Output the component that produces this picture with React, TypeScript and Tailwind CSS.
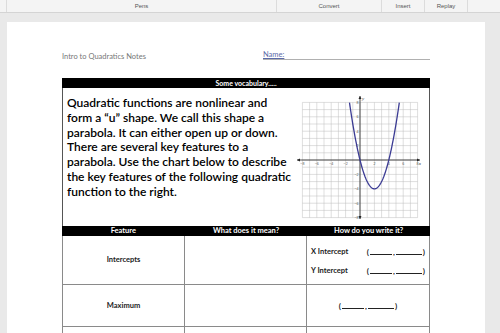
import React from 'react';

const U = 7.2;
const OX = 64;
const OY = 66;

const px = (x: number) => OX + x * U;
const py = (y: number) => OY - y * U;

function parabolaPath() {
    const pts: string[] = [];
    for (let i = 0; i <= 80; i++) {
        const x = -1.46 + (6.92 * i) / 80;
        const y = x * x - 4 * x;
        pts.push(`${i === 0 ? 'M' : 'L'}${px(x).toFixed(2)},${py(y).toFixed(2)}`);
    }
    return pts.join(' ');
}

const Graph = () => {
    const ticks = [-8, -6, -4, -2, 2, 4, 6, 8];
    const grid = Array.from({ length: 17 }, (_, i) => i - 8);
    return (
        <svg width="126" height="126" viewBox="0 0 126 126" className="shrink-0">
            {grid.map(g => (
                <g key={g}>
                    <line x1={px(g)} y1={py(8)} x2={px(g)} y2={py(-8)} stroke="#bdbdbd" strokeWidth="0.5" />
                    <line x1={px(-8)} y1={py(g)} x2={px(8)} y2={py(g)} stroke="#bdbdbd" strokeWidth="0.5" />
                </g>
            ))}
            <line x1="1" y1={OY} x2="124" y2={OY} stroke="#222" strokeWidth="0.8" />
            <line x1={OX} y1="2" x2={OX} y2="125" stroke="#222" strokeWidth="0.8" />
            <path d={`M124,${OY} l-3,-1.5 v3 z M1,${OY} l3,-1.5 v3 z`} fill="#222" />
            <path d={`M${OX},2 l-1.5,3 h3 z M${OX},125 l-1.5,-3 h3 z`} fill="#222" />
            {ticks.map(t => (
                <g key={t} fontSize="3.6" fill="#555" fontFamily="Liberation Sans, sans-serif">
                    <text x={px(t)} y={OY + 5} textAnchor="middle">{t < 0 ? `\u2212${-t}` : t}</text>
                    <text x={OX - 1.5} y={py(t) + 1.3} textAnchor="end">{t < 0 ? `\u2212${-t}` : t}</text>
                </g>
            ))}
            <text x="125" y={OY + 5} fontSize="5" fontStyle="italic" fill="#333" textAnchor="end" fontFamily="Liberation Serif, serif">x</text>
            <text x={OX + 2} y="6" fontSize="5" fontStyle="italic" fill="#333" fontFamily="Liberation Serif, serif">y</text>
            <path d={parabolaPath()} fill="none" stroke="#3b3b94" strokeWidth="1.3" />
        </svg>
    );
};

const Blank = () => (
    <span className="inline-flex items-end text-[8px] leading-[10px] font-bold text-[#222]">
        (<span className="w-[22px] border-b border-[#222] mb-[2px] mx-[1px]" />,<span className="w-[26px] border-b border-[#222] mb-[2px] mx-[1px]" />)
    </span>
);

const lines = [
    'Quadratic functions are nonlinear and',
    'form a \u201cu\u201d shape. We call this shape a',
    'parabola. It can either open up or down.',
    'There are several key features to a',
    'parabola. Use the chart below to describe',
    'the key features of the following quadratic',
    'function to the right.',
];

export default function App() {
    return (
        <div className="w-[500px] h-[333px] overflow-hidden bg-[#e9e9e9] flex flex-col font-['Lato',sans-serif]">
            <div className="h-[13px] shrink-0 bg-[#f4f4f4] border-b border-[#d4d4d4] flex text-[6px] text-[#555] font-['Liberation_Sans',sans-serif]">
                <div className="w-[7px] border-r border-[#dcdcdc]" />
                <div className="w-[270px] border-r border-[#dcdcdc] flex items-center justify-center">Pens</div>
                <div className="w-[105px] border-r border-[#dcdcdc] flex items-center justify-center">Convert</div>
                <div className="w-[43px] border-r border-[#dcdcdc] flex items-center justify-center">Insert</div>
                <div className="w-[43px] border-r border-[#dcdcdc] flex items-center justify-center">Replay</div>
                <div className="flex-1" />
            </div>
            <div className="flex-1 pl-[7px] pt-[9px]">
                <div className="w-[478px] h-[400px] bg-white px-[55px] pt-[30px]">
                    <div className="flex items-end h-[10px] text-[7.5px] leading-[10px]">
                        <div className="w-[201px] text-[#777]">Intro to Quadratics Notes</div>
                        <div className="flex-1 border-b border-[#b0b0b0] mb-[2px] leading-[8px]">
                            <span className="text-[#5b6aa8] underline">Name:</span>
                        </div>
                    </div>
                    <div className="mt-[16px] h-[10px] bg-black text-white text-[7px] leading-[10px] font-bold text-center">
                        Some vocabulary.....
                    </div>
                    <div className="h-[138px] border-x border-[#555] flex items-start">
                        <div className="pl-[4px] pt-[8px] w-[233px] text-[12px] leading-[14.8px] font-semibold text-black">
                            {lines.map(l => (
                                <div key={l} className="whitespace-nowrap">{l}</div>
                            ))}
                        </div>
                        <div className="mt-[6px]">
                            <Graph />
                        </div>
                    </div>
                    <div className="grid grid-cols-3 h-[10px] bg-black text-white text-[7.5px] leading-[10px] font-bold text-center">
                        <div>Feature</div>
                        <div>What does it mean?</div>
                        <div>How do you write it?</div>
                    </div>
                    <div className="grid grid-cols-3 h-[49px] border-x border-b border-[#8a8a8a] text-[7.5px] font-bold text-[#222]">
                        <div className="border-r border-[#8a8a8a] flex items-center justify-center">Intercepts</div>
                        <div className="border-r border-[#8a8a8a]" />
                        <div className="flex flex-col pl-[4px] pt-[11px] gap-[9px]">
                            <div className="flex items-center justify-between pr-[4px] h-[10px]">
                                <span>X Intercept</span>
                                <Blank />
                            </div>
                            <div className="flex items-center justify-between pr-[4px] h-[10px]">
                                <span>Y Intercept</span>
                                <Blank />
                            </div>
                        </div>
                    </div>
                    <div className="grid grid-cols-3 h-[42px] border-x border-b border-[#8a8a8a] text-[7.5px] font-bold text-[#222]">
                        <div className="border-r border-[#8a8a8a] flex items-center justify-center">Maximum</div>
                        <div className="border-r border-[#8a8a8a]" />
                        <div className="flex items-center justify-center">
                            <Blank />
                        </div>
                    </div>
                    <div className="grid grid-cols-3 h-[42px] border-x border-[#8a8a8a]">
                        <div className="border-r border-[#8a8a8a]" />
                        <div className="border-r border-[#8a8a8a]" />
                        <div />
                    </div>
                </div>
            </div>
        </div>
    );
}
